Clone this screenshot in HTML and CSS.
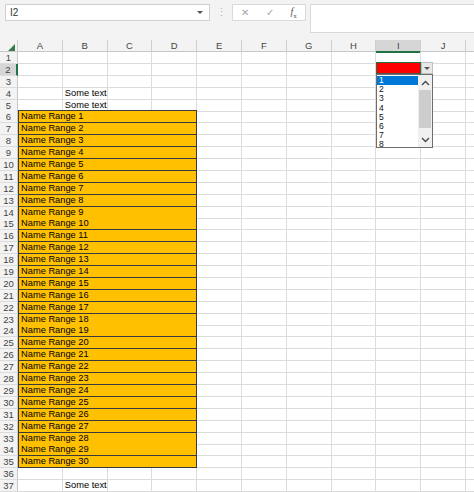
FILE: index.html
```html
<!DOCTYPE html>
<html lang="en">

<head>
    <meta charset="UTF-8">
    <meta name="viewport" content="width=device-width, initial-scale=1.0">
    <title>Sheet</title>
    <link rel="stylesheet" href="styles.css">
</head>

<body>
    <div class="formula-bar">
        <div class="name-box"><span>I2</span><span class="caret"></span></div>
        <div class="dots">⋮</div>
        <div class="fx-box">
            <span class="btn-x">✕</span>
            <span class="btn-ok">✓</span>
            <span class="btn-fx"><i>f</i><sub>x</sub></span>
        </div>
        <div class="formula-input"></div>
    </div>

    <div class="sheet" id="sheet">
        <div class="row head">
            <div class="corner"><span class="tri"></span></div>
            <div class="ch">A</div>
            <div class="ch">B</div>
            <div class="ch">C</div>
            <div class="ch">D</div>
            <div class="ch">E</div>
            <div class="ch">F</div>
            <div class="ch">G</div>
            <div class="ch">H</div>
            <div class="ch sel">I</div>
            <div class="ch">J</div>
            <div class="ch"></div>
        </div>

        <!-- combo box sitting on cell I2 -->
        <div class="combo">
            <div class="combo-top">
                <div class="combo-field"></div>
                <div class="combo-arrow"><span class="caret"></span></div>
            </div>
            <div class="combo-list">
                <div class="items">
                    <div class="item active">1</div>
                    <div class="item">2</div>
                    <div class="item">3</div>
                    <div class="item">4</div>
                    <div class="item">5</div>
                    <div class="item">6</div>
                    <div class="item">7</div>
                    <div class="item">8</div>
                </div>
                <div class="scroll">
                    <div class="sb-btn">
                        <svg width="9" height="6" viewBox="0 0 9 6"><path d="M1 5 L4.5 1.5 L8 5" fill="none" stroke="#444" stroke-width="1.3"/></svg>
                    </div>
                    <div class="sb-thumb"></div>
                    <div class="sb-track"></div>
                    <div class="sb-btn">
                        <svg width="9" height="6" viewBox="0 0 9 6"><path d="M1 1 L4.5 4.5 L8 1" fill="none" stroke="#444" stroke-width="1.3"/></svg>
                    </div>
                </div>
            </div>
        </div>
    </div>

    <script>
        const sheet = document.getElementById('sheet')
        const text = { 4: 'Some text', 5: 'Some text', 37: 'Some text' }

        for (let r = 1; r <= 37; r++) {
            let html = `<div class="rh${r == 2 ? ' sel' : ''}">${r}</div>`
            let first = 0
            if (r >= 6 && r <= 35) {
                html += `<div class="cell fill${r == 6 ? ' first' : ''}">Name Range ${r - 5}</div>`
                first = 4
            }
            for (let c = first; c < 11; c++) {
                let t = (c == 1 && text[r]) ? text[r] : ''
                html += `<div class="cell">${t}</div>`
            }
            sheet.innerHTML += `<div class="row">${html}</div>`
        }
    </script>
</body>

</html>
```

FILE: styles.css
```css
* {
    box-sizing: border-box;
}

body {
    margin: 0;
    padding: 0;
    width: 474px;
    height: 492px;
    overflow: hidden;
    background-color: #fff;
    font-family: "Liberation Sans", Arial, sans-serif;
    color: #000;
}

/* formula bar */
.formula-bar {
    height: 40px;
    background-color: #f3f3f3;
    display: flex;
    align-items: flex-start;
    padding: 4px 0 0 5px;
}

.name-box {
    width: 205px;
    height: 17px;
    background-color: #fff;
    border: 1px solid #d0d0d0;
    display: flex;
    align-items: center;
    justify-content: space-between;
    padding: 0 6px 0 4px;
    font-size: 10px;
    color: #333;
}

.caret {
    width: 0;
    height: 0;
    border-left: 3px solid transparent;
    border-right: 3px solid transparent;
    border-top: 3px solid #555;
}

.dots {
    width: 22px;
    text-align: center;
    font-size: 11px;
    line-height: 17px;
    color: #b8b8b8;
}

.fx-box {
    width: 74px;
    height: 17px;
    background-color: #fff;
    border: 1px solid #d9d9d9;
    display: flex;
    align-items: center;
    justify-content: space-around;
    font-size: 10px;
    color: #a6a6a6;
}

.btn-fx {
    color: #555;
    font-family: "Liberation Serif", serif;
    font-size: 10px;
}

.btn-fx sub {
    font-size: 7px;
}

.formula-input {
    flex: 1;
    height: 29px;
    margin-left: 4px;
    background-color: #fff;
    border: 1px solid #d9d9d9;
    border-right: none;
}

/* grid */
.sheet {
    position: relative;
}

.row {
    display: grid;
    grid-template-columns: 18px repeat(11, 44.8px);
    height: 11.9px;
    font-size: 9.3px;
}

.row.head {
    height: 12px;
    background-color: #f3f3f3;
    border-bottom: 1px solid #c8c8c8;
}

.corner {
    position: relative;
    border-right: 1px solid #d0d0d0;
}

.corner .tri {
    position: absolute;
    right: 2px;
    bottom: 2px;
    width: 0;
    height: 0;
    border-left: 7px solid transparent;
    border-bottom: 7px solid #3a7a4a;
}

.ch {
    border-right: 1px solid #d0d0d0;
    text-align: center;
    font-size: 9.5px;
    line-height: 11px;
    color: #444;
}

.ch.sel {
    background-color: #d6d6d6;
    border-bottom: 2px solid #217346;
}

.rh {
    background-color: #f3f3f3;
    border-right: 1px solid #c8c8c8;
    border-bottom: 1px solid #dcdcdc;
    text-align: center;
    font-size: 9.5px;
    line-height: 11px;
    color: #444;
}

.rh.sel {
    background-color: #d6d6d6;
    border-right: 2px solid #217346;
}

.cell {
    border-right: 1px solid #dcdcdc;
    border-bottom: 1px solid #dcdcdc;
    padding-left: 2px;
    line-height: 11px;
    white-space: nowrap;
}

.cell.fill {
    grid-column: span 4;
    background-color: #ffc000;
    border-right: 1px solid #3a3a3a;
    border-bottom: 1px solid #3a3a3a;
    border-left: 1px solid #3a3a3a;
}

.cell.fill.first {
    box-shadow: 0 -1px 0 #3a3a3a;
}

/* combo box on I2 */
.combo {
    position: absolute;
    top: 22px;
    left: 376px;
    width: 57px;
}

.combo-top {
    display: flex;
    height: 12px;
}

.combo-field {
    flex: 1;
    background-color: #ff0000;
    border: 1px solid #217346;
    border-bottom: 1px solid #555;
}

.combo-arrow {
    width: 12px;
    background-color: #e8e8e8;
    border: 1px solid #c0c0c0;
    display: flex;
    align-items: center;
    justify-content: center;
}

.combo-list {
    height: 74px;
    background-color: #fff;
    border: 1px solid #6e6e6e;
    display: flex;
}

.items {
    flex: 1;
    font-size: 8.5px;
    padding-top: 1px;
}

.item {
    height: 9.2px;
    line-height: 9px;
    padding-left: 2px;
    color: #111;
}

.item.active {
    background-color: #0078d7;
    color: #fff;
}

.scroll {
    width: 14px;
    display: flex;
    flex-direction: column;
    background-color: #f0f0f0;
}

.sb-btn {
    height: 15px;
    display: flex;
    align-items: center;
    justify-content: center;
}

.sb-thumb {
    height: 38px;
    margin: 0 1px;
    background-color: #cdcdcd;
}

.sb-track {
    flex: 1;
}
```
